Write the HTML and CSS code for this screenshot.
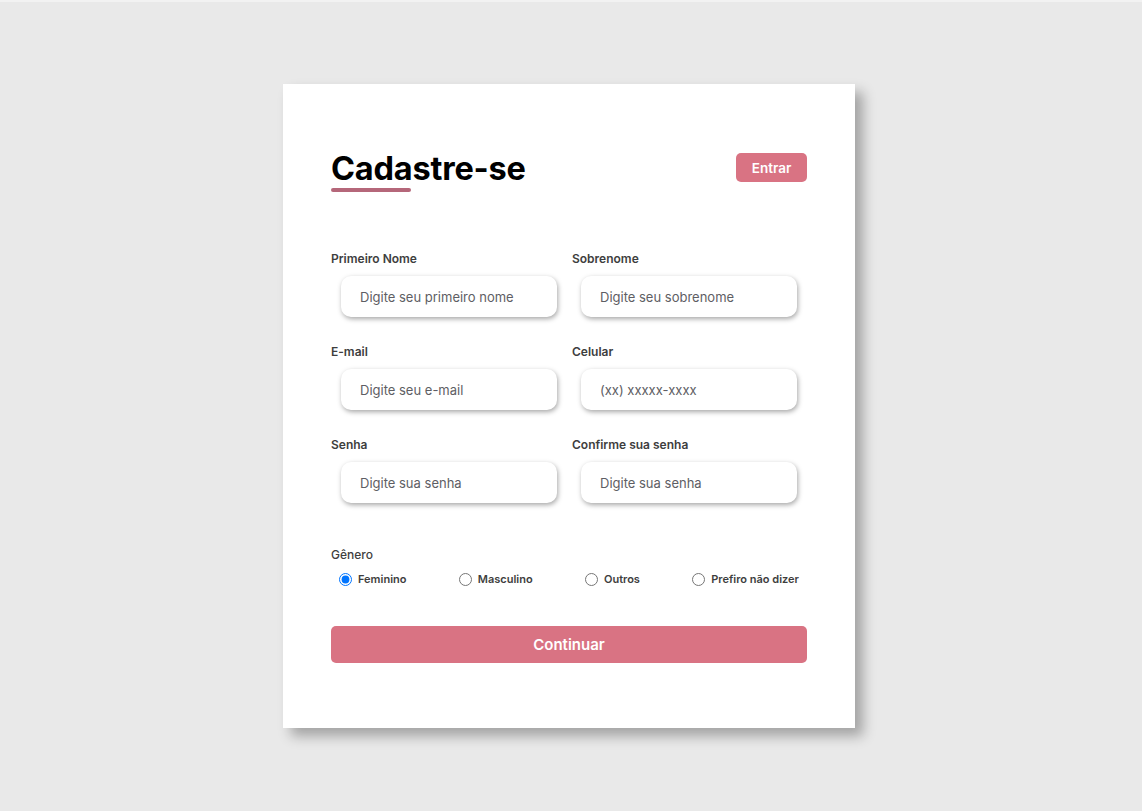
FILE: index.html
```html
<!DOCTYPE html>
<html lang="pt-BR">
<head>
<meta charset="utf-8">
<title>Cadastre-se</title>
<link rel="stylesheet" href="styles.css">
</head>
<body>
<main class="page">
  <form class="card">
    <header class="head">
      <div class="title-wrap">
        <h1 class="title">Cadastre-se</h1>
        <div class="underline"></div>
      </div>
      <button type="button" class="login">Entrar</button>
    </header>

    <div class="grid">
      <div class="field">
        <label class="label">Primeiro Nome</label>
        <input class="input" type="text" placeholder="Digite seu primeiro nome">
      </div>
      <div class="field">
        <label class="label">Sobrenome</label>
        <input class="input" type="text" placeholder="Digite seu sobrenome">
      </div>
      <div class="field">
        <label class="label">E-mail</label>
        <input class="input" type="text" placeholder="Digite seu e-mail">
      </div>
      <div class="field">
        <label class="label">Celular</label>
        <input class="input" type="text" placeholder="(xx) xxxxx-xxxx">
      </div>
      <div class="field">
        <label class="label">Senha</label>
        <input class="input" type="password" placeholder="Digite sua senha">
      </div>
      <div class="field">
        <label class="label">Confirme sua senha</label>
        <input class="input" type="password" placeholder="Digite sua senha">
      </div>
    </div>

    <div class="gender">
      <div class="label label-light">Gênero</div>
      <div class="radios">
        <label class="radio"><input type="radio" name="g" checked><span>Feminino</span></label>
        <label class="radio"><input type="radio" name="g"><span>Masculino</span></label>
        <label class="radio"><input type="radio" name="g"><span>Outros</span></label>
        <label class="radio"><input type="radio" name="g"><span>Prefiro não dizer</span></label>
      </div>
    </div>

    <button type="button" class="continue">Continuar</button>
  </form>
</main>
</body>
</html>
```

FILE: styles.css
```css
* { box-sizing: border-box; }
html, body { margin: 0; padding: 0; }
body {
  background: #e9e9e9;
  font-family: Inter, "Noto Sans", sans-serif;
  border-top: 2px solid #f2f2f2;
  height: 811px;
}
.page {
  display: flex;
  justify-content: center;
  padding-top: 82px;
}
.card {
  width: 572px;
  height: 644px;
  background: #fff;
  box-shadow: 8px 8px 12px rgba(0,0,0,0.3);
  padding: 66px 48px 0 48px;
  margin-left: -4px;
}
.head {
  display: flex;
  justify-content: space-between;
  align-items: flex-start;
}
.title-wrap { display: flex; flex-direction: column; }
.title {
  margin: 0;
  font-size: 32.5px;
  font-weight: 700;
  color: #000;
  line-height: 38px;
  letter-spacing: -0.2px;
}
.underline {
  width: 80px;
  height: 4px;
  border-radius: 2px;
  background: #b5677a;
}
.login {
  margin-top: 3px;
  width: 71px;
  height: 29px;
  border: none;
  border-radius: 5px;
  background: #d97383;
  color: #fff;
  font-family: inherit;
  font-size: 13.5px;
  font-weight: 600;
  padding: 0;
}
.grid {
  margin-top: 59px;
  display: grid;
  grid-template-columns: 241px 235px;
  row-gap: 27px;
}
.field { display: flex; flex-direction: column; }
.label {
  font-size: 12px;
  font-weight: 600;
  color: #3e3e3e;
  line-height: 15px;
}
.label-light { font-weight: 500; }
.input {
  margin: 10px 0 0 10px;
  width: 216px;
  height: 41px;
  border: none;
  border-radius: 10px;
  box-shadow: 1px 2px 5px rgba(0,0,0,0.35);
  padding: 0 19px;
  font-family: inherit;
  font-size: 13px;
  color: #333;
  outline: none;
  background: #fff;
}
.field:nth-child(even) .input { margin-left: 9px; }
.input::placeholder { color: #5e5e64; }
.gender { margin-top: 44px; }
.radios {
  display: flex;
  justify-content: space-between;
  padding: 0 8px;
  margin-top: 10px;
}
.radio {
  display: flex;
  align-items: center;
  gap: 6px;
  font-size: 11px;
  font-weight: 600;
  color: #3e3e3e;
}
.radio input {
  margin: 0;
  width: 13px;
  height: 13px;
}
.continue {
  margin-top: 40px;
  width: 100%;
  height: 37px;
  border: none;
  border-radius: 5px;
  background: #d97383;
  color: #fff;
  font-family: inherit;
  font-size: 15px;
  font-weight: 600;
}
```
